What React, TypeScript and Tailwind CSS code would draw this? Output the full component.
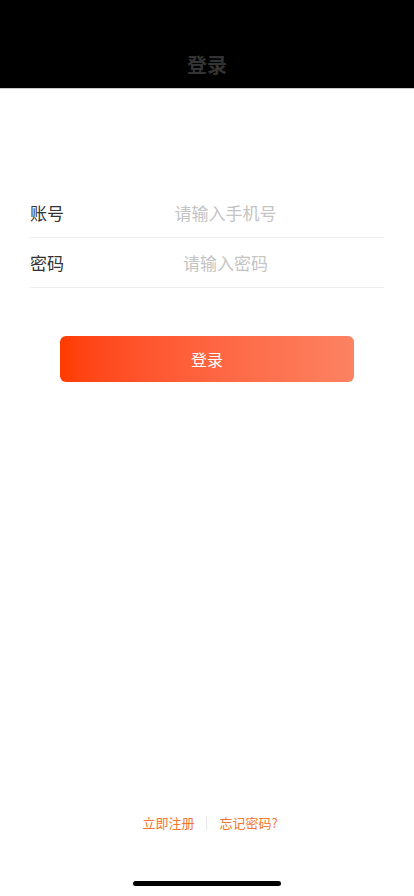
export default function App() {
  return (
    <div
      className="flex min-h-[896px] w-full flex-col bg-white"
      style={{ fontFamily: '"Noto Sans CJK SC", "Noto Sans", sans-serif' }}
    >
      <header className="flex h-[89px] shrink-0 items-end justify-center border-b border-[#c8c8c8] bg-black pb-[9px]">
        <h1 className="text-[20px] font-semibold leading-[28px] text-[#333333]">登录</h1>
      </header>

      <div className="mt-[99px] pl-[29px] pr-[30px]">
        <div className="flex h-[50px] items-center border-b border-[#eeeeee]">
          <span className="w-[38px] pl-[1px] text-[17px] text-[#333333]">账号</span>
          <input
            className="min-w-0 flex-1 bg-transparent text-center text-[17px] text-[#333333] outline-none placeholder:text-[#c4c4c4]"
            placeholder="请输入手机号"
          />
        </div>
        <div className="flex h-[50px] items-center border-b border-[#eeeeee]">
          <span className="w-[38px] pl-[1px] text-[17px] text-[#333333]">密码</span>
          <input
            type="password"
            className="min-w-0 flex-1 bg-transparent text-center text-[17px] text-[#333333] outline-none placeholder:text-[#c4c4c4]"
            placeholder="请输入密码"
          />
        </div>
      </div>

      <div className="mt-[48px] flex justify-center">
        <button className="h-[46px] w-[294px] rounded-[6px] bg-gradient-to-r from-[#ff3c00] to-[#fc8262] text-[16px] text-white">
          登录
        </button>
      </div>

      <div className="mt-auto flex items-center justify-center gap-[12px] pl-[6px] text-[13px] leading-[20px] text-[#f4762e]">
        <span>立即注册</span>
        <span className="h-[14px] w-px bg-[#e8e8e8]" />
        <span>忘记密码?</span>
      </div>

      <div className="mt-[48px] flex justify-center pb-[10px]">
        <div className="h-[5px] w-[148px] rounded-full bg-black" />
      </div>
    </div>
  );
}
